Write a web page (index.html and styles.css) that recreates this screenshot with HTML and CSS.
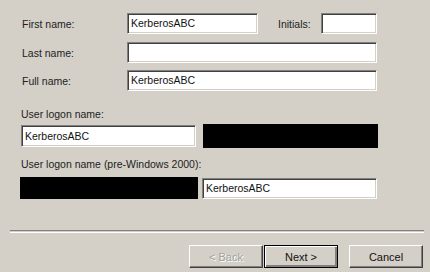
FILE: index.html
```html
<!DOCTYPE html>
<html>
<head>
<meta charset="utf-8">
<link rel="stylesheet" href="styles.css">
</head>
<body>
<div class="page">
  <div class="names">
    <div class="row r1">
      <span class="lbl">First name:</span>
      <div class="field w-first">KerberosABC</div>
      <span class="lbl-init">Initials:</span>
      <div class="field w-init"></div>
    </div>
    <div class="row r2">
      <span class="lbl">Last name:</span>
      <div class="field w-wide"></div>
    </div>
    <div class="row r3">
      <span class="lbl">Full name:</span>
      <div class="field w-wide">KerberosABC</div>
    </div>
  </div>
  <div class="logon">
    <div class="cap cap1">User logon name:</div>
    <div class="lrow lrow1">
      <div class="field w-logon">KerberosABC</div>
      <div class="redact red1"></div>
    </div>
    <div class="cap cap2">User logon name (pre-Windows 2000):</div>
    <div class="lrow lrow2">
      <div class="redact red2"></div>
      <div class="field w-pre">KerberosABC</div>
    </div>
  </div>
  <div class="sep"></div>
  <div class="buttons">
    <div class="btn disabled"><span>&lt; Back</span></div>
    <div class="btn default"><span>Next &gt;</span></div>
    <div class="btn cancel"><span>Cancel</span></div>
  </div>
</div>
</body>
</html>
```
FILE: styles.css
```css
html, body {
  margin: 0;
  padding: 0;
  background: #d4d0c8;
}
body {
  width: 430px;
  height: 272px;
  overflow: hidden;
  font-family: "Liberation Sans", Arial, sans-serif;
  font-size: 10.5px;
  color: #222;
}
.page {
  display: flex;
  flex-direction: column;
}
.names {
  padding: 13px 0 0 22px;
}
.row {
  display: flex;
  align-items: center;
  height: 21px;
}
.r2 { margin-top: 8px; }
.r3 { margin-top: 7px; }
.lbl {
  width: 105px;
}
.lbl-init {
  margin-left: 20px;
  width: 43px;
}
.field {
  box-sizing: border-box;
  height: 21px;
  background: #fff;
  border-top: 1px solid #808080;
  border-left: 1px solid #808080;
  border-right: 1px solid #fff;
  border-bottom: 1px solid #fff;
  box-shadow: inset 1px 1px 0 #404040, inset -1px -1px 0 #d4d0c8;
  padding: 0 0 0 3px;
  line-height: 19px;
  color: #111;
  white-space: nowrap;
  overflow: hidden;
}
.w-first { width: 131px; }
.w-init { width: 56px; }
.w-wide { width: 250px; }
.logon {
  padding-left: 21px;
}
.cap {
  line-height: 13px;
}
.cap1 { margin-top: 17px; }
.cap2 { margin-top: 10px; }
.lrow {
  display: flex;
  align-items: center;
}
.lrow1 {
  margin-top: 3px;
  height: 24px;
  gap: 7px;
}
.lrow1 .field {
  height: 22px;
  line-height: 20px;
}
.w-logon { width: 175px; }
.red1 {
  width: 175px;
  height: 24px;
  background: #000;
}
.lrow2 {
  margin-top: 6px;
  margin-left: -1px;
  height: 22px;
  gap: 4px;
}
.red2 {
  width: 178px;
  height: 22px;
  background: #000;
}
.w-pre { width: 175px; }
.redact {
  box-sizing: border-box;
}
.sep {
  margin: 31px 6px 0 10px;
  height: 1px;
  border-top: 1px solid #808080;
  border-bottom: 1px solid #fff;
}
.buttons {
  display: flex;
  justify-content: flex-end;
  margin-top: 12px;
  padding-right: 7px;
}
.btn {
  box-sizing: border-box;
  width: 74px;
  height: 23px;
  display: flex;
  align-items: center;
  justify-content: center;
  border-top: 1px solid #fff;
  border-left: 1px solid #fff;
  border-right: 1px solid #404040;
  border-bottom: 1px solid #404040;
  box-shadow: inset -1px -1px 0 #808080;
  color: #111;
  font-size: 11px;
}
.btn.disabled {
  color: #a0a0a0;
  text-shadow: 1px 1px 0 #fff;
}
.btn.default {
  margin-left: 1px;
  border: 1px solid #000;
  box-shadow: inset 1px 1px 0 #fff, inset -2px -2px 0 #808080, inset -1px -1px 0 #404040;
}
.btn.cancel {
  margin-left: 11px;
}
```
